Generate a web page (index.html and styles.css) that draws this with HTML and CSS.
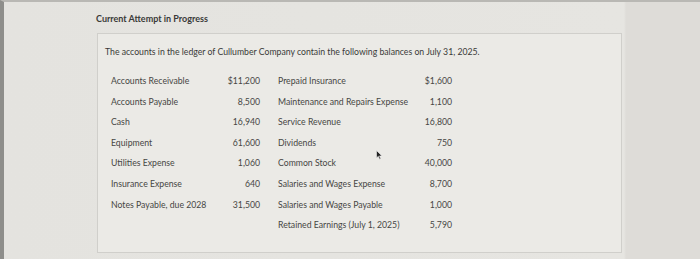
FILE: index.html
```html
<!DOCTYPE html>
<html>
<head>
<meta charset="utf-8">
<link rel="stylesheet" href="styles.css">
</head>
<body>
<div class="frame">
  <div class="page">
    <h1 class="title">Current Attempt in Progress</h1>
    <div class="card">
      <p class="intro">The accounts in the ledger of Cullumber Company contain the following balances on July 31, 2025.</p>
      <div class="ledger">
        <span class="lbl">Accounts Receivable</span><span class="amt">$11,200</span><span class="lbl2">Prepaid Insurance</span><span class="amt2">$1,600</span>
        <span class="lbl">Accounts Payable</span><span class="amt">8,500</span><span class="lbl2">Maintenance and Repairs Expense</span><span class="amt2">1,100</span>
        <span class="lbl">Cash</span><span class="amt">16,940</span><span class="lbl2">Service Revenue</span><span class="amt2">16,800</span>
        <span class="lbl">Equipment</span><span class="amt">61,600</span><span class="lbl2">Dividends</span><span class="amt2">750</span>
        <span class="lbl">Utilities Expense</span><span class="amt">1,060</span><span class="lbl2">Common Stock</span><span class="amt2">40,000</span>
        <span class="lbl">Insurance Expense</span><span class="amt">640</span><span class="lbl2">Salaries and Wages Expense</span><span class="amt2">8,700</span>
        <span class="lbl">Notes Payable, due 2028</span><span class="amt">31,500</span><span class="lbl2">Salaries and Wages Payable</span><span class="amt2">1,000</span>
        <span class="lbl"></span><span class="amt"></span><span class="lbl2">Retained Earnings (July 1, 2025)</span><span class="amt2">5,790</span>
      </div>
    </div>
  </div>
  <svg class="cursor" width="7" height="10" viewBox="0 0 7 10"><path d="M0.5 0.5 L0.5 8 L2.3 6.3 L3.6 9.3 L4.8 8.8 L3.5 5.9 L6 5.9 Z" fill="#222" stroke="#eee" stroke-width="0.6"/></svg>
</div>
</body>
</html>
```

FILE: styles.css
```css
html, body {
  margin: 0;
  padding: 0;
}
body {
  width: 700px;
  height: 259px;
  overflow: hidden;
  font-family: Lato, "Open Sans", sans-serif;
  background: #dfded9;
}
.frame {
  position: relative;
  box-sizing: border-box;
  width: 700px;
  height: 259px;
  border-left: 4px solid #8e8e8b;
  border-top: 2px solid #b9b8b4;
  background: linear-gradient(to right, #e4e3df 0, #e6e5e1 620px, #dedcd8 622px);
}
.page {
  padding-left: 92px;
  width: 530px;
}
.title {
  margin: 0;
  padding-top: 11px;
  font-size: 9px;
  line-height: 12px;
  font-weight: 700;
  color: #3a3a38;
}
.card {
  margin-top: 8px;
  margin-left: 1px;
  box-sizing: border-box;
  width: 525px;
  height: 220px;
  border: 1px solid #d0cfcb;
  background: #ebeae6;
  padding: 12px 0 0 7px;
}
.intro {
  margin: 0;
  font-size: 8.7px;
  line-height: 12px;
  color: #3a3a38;
}
.ledger {
  display: grid;
  grid-template-columns: 100px 49px 148px 44px;
  grid-auto-rows: 20.6px;
  margin-top: 13px;
  margin-left: 6px;
  font-size: 8.7px;
  line-height: 20.6px;
  color: #464644;
  white-space: nowrap;
}
.amt, .amt2 {
  text-align: right;
}
.lbl2 {
  padding-left: 18px;
}
.cursor {
  position: absolute;
  left: 372px;
  top: 148px;
}
```
